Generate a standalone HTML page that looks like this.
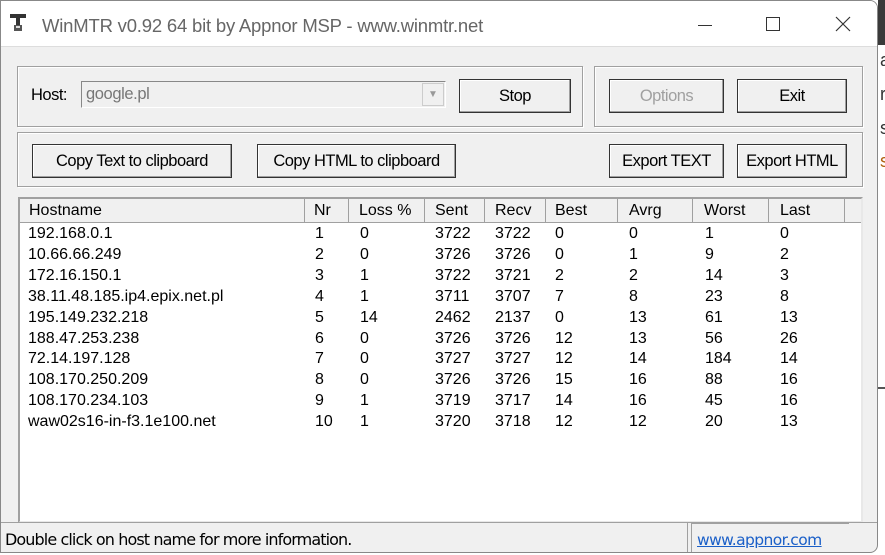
<!DOCTYPE html>
<html><head><style>
*{box-sizing:border-box;margin:0;padding:0}
body{width:885px;height:555px;overflow:hidden;background:#fff;font-family:"Liberation Sans",sans-serif;position:relative}
.a{position:absolute}
.win{left:0;top:0;width:878px;height:553px;background:#f0f0f0;border:1px solid #888;border-radius:0 8px 8px 0;overflow:hidden}
.title{left:0;top:0;width:878px;height:46px;background:#fff;border-bottom:1px solid #ddd}
.grp{border:1px solid #a0a0a0;box-shadow:inset 1px 1px 0 #fff,1px 1px 0 #fff}
.btn{border:1px solid #333;background:#f0f0f0;box-shadow:inset -1px -1px 0 #a0a0a0,inset 1px 1px 0 #fff;font-size:16.5px;display:flex;align-items:center;justify-content:center;color:#000;letter-spacing:-0.5px}
.cell{position:absolute;font-size:16px;color:#000}
.hd{position:absolute;top:198px;height:24px;border-right:1px solid #a0a0a0;border-bottom:1px solid #a0a0a0;background:#f0f0f0;font-size:16px;padding:3px 0 0 6px;color:#000}
</style></head><body>
<div class="a" style="left:878px;top:0;width:7px;height:45px;background:#3a3a3a"></div>
<div class="a" style="left:880px;top:50px;font-size:18px;color:#333">a</div>
<div class="a" style="left:880px;top:84px;font-size:18px;color:#333">r</div>
<div class="a" style="left:880px;top:118px;font-size:18px;color:#333">s</div>
<div class="a" style="left:880px;top:151px;font-size:18px;color:#b06010">s</div>
<div class="a" style="left:878px;top:387px;width:7px;height:2px;background:#555"></div>
<div class="a win">
 <div class="a title">
  <svg class="a" style="left:8px;top:12px" width="18" height="20" viewBox="0 0 18 20"><rect x="1" y="1" width="16" height="4" fill="#333"/><rect x="7" y="5" width="4" height="13" fill="#333"/><rect x="5" y="12" width="8" height="6" fill="#555"/><rect x="7" y="13" width="4" height="2" fill="#ddd"/></svg>
  <div class="a" style="left:41px;top:14px;font-size:18.5px;color:#666;letter-spacing:-0.2px">WinMTR v0.92 64 bit by Appnor MSP - www.winmtr.net</div>
  <div class="a" style="left:697px;top:24px;width:14px;height:1px;background:#333"></div>
  <div class="a" style="left:765px;top:16px;width:14px;height:14px;border:1px solid #333"></div>
  <svg class="a" style="left:834px;top:15px" width="16" height="16"><path d="M1 1L15 15M15 1L1 15" stroke="#333" stroke-width="1.2"/></svg>
 </div>
 <div class="a grp" style="left:16px;top:65px;width:566px;height:61px"></div>
 <div class="a grp" style="left:593px;top:65px;width:269px;height:61px"></div>
 <div class="a grp" style="left:16px;top:131px;width:846px;height:55px"></div>
 <div class="a" style="left:30px;top:85px;font-size:16.5px;letter-spacing:-0.5px">Host:</div>
 <div class="a" style="left:80px;top:80px;width:365px;height:27px;border:1px solid #888;border-right-color:#fff;border-bottom-color:#fff;background:#f0f0f0;font-size:16.5px;color:#777;padding:3px 0 0 4px;letter-spacing:-0.4px">google.pl</div>
 <div class="a" style="left:421px;top:82px;width:22px;height:23px;border:1px solid #ccc;background:#f0f0f0;font-size:10px;color:#999;text-align:center;line-height:22px">▼</div>
 <div class="a btn" style="left:458px;top:78px;width:112px;height:34px">Stop</div>
 <div class="a btn" style="left:608px;top:78px;width:115px;height:34px;color:#a0a0a0">Options</div>
 <div class="a btn" style="left:736px;top:78px;width:110px;height:34px">Exit</div>
 <div class="a btn" style="left:31px;top:143px;width:200px;height:34px">Copy Text to clipboard</div>
 <div class="a btn" style="left:256px;top:143px;width:199px;height:34px">Copy HTML to clipboard</div>
 <div class="a btn" style="left:608px;top:143px;width:115px;height:34px">Export TEXT</div>
 <div class="a btn" style="left:736px;top:143px;width:110px;height:34px">Export HTML</div>
 <div class="a" style="left:17px;top:196px;width:845px;height:326px;background:#fff;border:2px solid #a0a0a0;border-right-color:#e8e8e8;border-bottom-color:#e8e8e8"></div>
 <div class="hd" style="left:19px;width:285px;padding-left:9px">Hostname</div>
 <div class="hd" style="left:304px;width:44px;padding-left:9px">Nr</div>
 <div class="hd" style="left:348px;width:76px;padding-left:10px">Loss %</div>
 <div class="hd" style="left:424px;width:60px;padding-left:10px">Sent</div>
 <div class="hd" style="left:484px;width:61px;padding-left:10px">Recv</div>
 <div class="hd" style="left:545px;width:72px;padding-left:9px">Best</div>
 <div class="hd" style="left:617px;width:75px;padding-left:11px">Avrg</div>
 <div class="hd" style="left:692px;width:76px;padding-left:11px">Worst</div>
 <div class="hd" style="left:768px;width:76px;padding-left:11px">Last</div>
 <div class="hd" style="left:844px;width:16px;border-right:none"></div>
 <div id="rows"></div>
 <div class="a" style="left:0;top:521px;width:878px;height:1px;background:#a0a0a0"></div>
 <div class="a" style="left:4px;top:529px;font-size:16px;color:#000;font-family:'DejaVu Sans',sans-serif;letter-spacing:-0.9px">Double click on host name for more information.</div>
 <div class="a" style="left:686px;top:522px;width:1px;height:30px;background:#a0a0a0"></div>
 <div class="a" style="left:690px;top:522px;width:158px;height:30px;border-left:1px solid #a0a0a0;border-top:1px solid #a0a0a0"></div>
 <div class="a" style="left:696px;top:530px;font-size:15.5px;color:#1a5fc8;text-decoration:underline;font-family:'DejaVu Sans',sans-serif;letter-spacing:-0.6px">www.appnor.com</div>
</div>
<script>
var d=[["192.168.0.1",1,0,3722,3722,0,0,1,0],["10.66.66.249",2,0,3726,3726,0,1,9,2],["172.16.150.1",3,1,3722,3721,2,2,14,3],["38.11.48.185.ip4.epix.net.pl",4,1,3711,3707,7,8,23,8],["195.149.232.218",5,14,2462,2137,0,13,61,13],["188.47.253.238",6,0,3726,3726,12,13,56,26],["72.14.197.128",7,0,3727,3727,12,14,184,14],["108.170.250.209",8,0,3726,3726,15,16,88,16],["108.170.234.103",9,1,3719,3717,14,16,45,16],["waw02s16-in-f3.1e100.net",10,1,3720,3718,12,12,20,13]];
var xs=[27,314,359,434,494,554,628,704,779],h="";
d.forEach(function(r,i){r.forEach(function(v,j){h+='<div class="cell" style="left:'+xs[j]+'px;top:'+(224+i*20.9)+'px">'+v+'</div>';});});
document.getElementById("rows").innerHTML=h;
</script>
</body></html>
